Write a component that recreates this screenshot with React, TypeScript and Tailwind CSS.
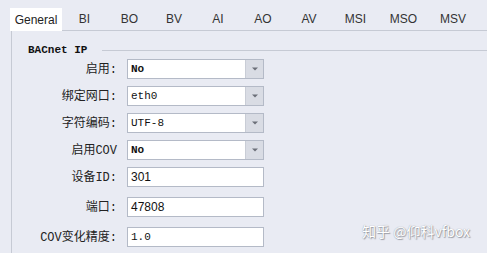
const tabs = [
  { name: 'BI', w: 'w-[45px]' },
  { name: 'BO', w: 'w-[45px]' },
  { name: 'BV', w: 'w-[44px]' },
  { name: 'AI', w: 'w-[44px]' },
  { name: 'AO', w: 'w-[46px]' },
  { name: 'AV', w: 'w-[46px]' },
  { name: 'MSI', w: 'w-[47px]' },
  { name: 'MSO', w: 'w-[49px]' },
  { name: 'MSV', w: 'w-[50px]' },
];

const mono = "font-['Liberation_Mono','Noto_Sans_CJK_SC',monospace]";

const Select = ({ value, bold }: { value: string; bold?: boolean }) => (
  <div className="w-[137px] h-[20px] bg-white border border-[#b4bac7] flex items-center">
    <span className={`flex-1 pl-[3px] text-[11px] text-[#111] ${mono} ${bold ? 'font-bold' : ''}`}>{value}</span>
    <div className="w-[18px] h-full bg-[#d9dce4] border-l border-[#c9cdd6] flex items-center justify-center">
      <svg width="6" height="4" viewBox="0 0 6 4">
        <path d="M0 0.5H6L3 3.5Z" fill="#6b6f78" />
      </svg>
    </div>
  </div>
);

const Input = ({ value, monoFont }: { value: string; monoFont?: boolean }) => (
  <div className="w-[137px] h-[20px] bg-white border border-[#b4bac7] flex items-center">
    <span className={`pl-[3px] text-[#111] ${monoFont ? `${mono} text-[11px]` : 'text-[12px]'}`}>{value}</span>
  </div>
);

const Row = ({ label, children, className }: { label: React.ReactNode; children: React.ReactNode; className?: string }) => (
  <div className={`flex items-center h-[20px] ${className ?? ''}`}>
    <div className="w-[105px] text-right text-[12px] text-[#222] leading-none whitespace-nowrap">{label}</div>
    <div className="ml-[10px]">{children}</div>
  </div>
);

const Colon = () => <span className={`${mono} text-[12px]`}>:</span>;

export default function App() {
  return (
    <div className="w-[487px] h-[253px] bg-[#e9ebf3] relative overflow-hidden font-['Liberation_Sans','Noto_Sans_CJK_SC',sans-serif]">
      <div className="flex h-[31px] items-end pl-[10px]">
        <div className="w-[52px] h-[23px] bg-white flex items-center justify-center text-[12px] text-[#222]">General</div>
        <div className="flex-1 h-full flex items-end border-b border-[#c6cad4]">
          {tabs.map((t) => (
            <div key={t.name} className={`${t.w} h-[22px] flex items-center justify-center text-[12px] text-[#333]`}>
              {t.name}
            </div>
          ))}
        </div>
      </div>

      <div className="ml-[11px] h-[222px] border-l border-[#c6cad4] pt-[12px]">
        <div className="flex items-center h-[14px] pl-[16px]">
          <span className={`${mono} text-[11px] font-bold text-[#111]`}>BACnet IP</span>
          <div className="flex-1 h-px bg-[#c6cad4] ml-[15px]" />
        </div>

        <div className="flex flex-col mt-[2px]">
          <Row label={<>启用<Colon /></>}>
            <Select value="No" bold />
          </Row>
          <Row className="mt-[7px]" label={<>绑定网口<Colon /></>}>
            <Select value="eth0" />
          </Row>
          <Row className="mt-[7px]" label={<>字符编码<Colon /></>}>
            <Select value="UTF-8" />
          </Row>
          <Row className="mt-[7px]" label={<>启用<span className={`${mono} text-[12px]`}>COV</span></>}>
            <Select value="No" bold />
          </Row>
          <Row className="mt-[7px]" label={<>设备<span className={`${mono} text-[12px]`}>ID</span><Colon /></>}>
            <Input value="301" />
          </Row>
          <Row className="mt-[10px]" label={<>端口<Colon /></>}>
            <Input value="47808" />
          </Row>
          <Row className="mt-[10px]" label={<><span className={`${mono} text-[12px]`}>COV</span>变化精度<Colon /></>}>
            <Input value="1.0" monoFont />
          </Row>
        </div>
      </div>

      <div className="absolute left-[362px] top-[221px] text-[14px] text-white font-['Noto_Sans_CJK_SC',sans-serif] [text-shadow:0_0_1px_#8a8d96,1px_1px_1px_#9a9da6]">
        知乎 @仰科vfbox
      </div>
    </div>
  );
}
